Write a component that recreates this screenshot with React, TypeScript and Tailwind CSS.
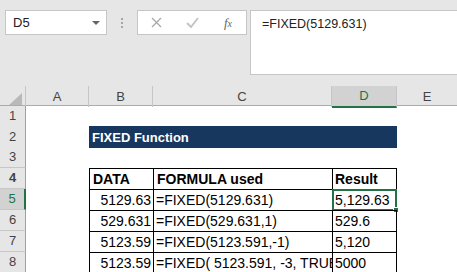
import React from 'react'

const grid = 'grid grid-cols-[26px_63px_64px_179px_65px_1fr]'

const rows = [
    { n: 5, data: '5129.63', formula: '=FIXED(5129.631)', result: '5,129.63', active: true },
    { n: 6, data: '529.631', formula: '=FIXED(529.631,1)', result: '529.6' },
    { n: 7, data: '5123.59', formula: '=FIXED(5123.591,-1)', result: '5,120' },
    { n: 8, data: '5123.59', formula: '=FIXED( 5123.591, -3, TRUE)', result: '5000' },
]

const RowHead = ({ n, active = false }: { n: number; active?: boolean }) => (
    <div
        className={
            active
                ? 'flex items-center justify-center bg-[#d2d2d2] text-[#217346] border-b border-b-[#c6c6c6] border-r-2 border-r-[#217346] text-[13px]'
                : 'flex items-center justify-center bg-[#e6e6e6] text-[#444] border-b border-b-[#c6c6c6] border-r border-r-[#9f9f9f] text-[13px]'
        }
    >
        {n}
    </div>
)

const App = () => {
    return (
        <div className="w-[457px] h-[272px] overflow-hidden bg-white font-['Liberation_Sans',Arial,sans-serif] text-black">
            {/* formula bar area */}
            <div className="h-[86px] bg-[#e6e6e6] flex items-start pt-[10px] pl-[5px]">
                <div className="w-[102px] h-[25px] bg-white border border-[#c6c6c6] flex items-center justify-between pl-[7px] pr-[6px] text-[13px] text-[#222]">
                    <span>D5</span>
                    <svg width="8" height="4" viewBox="0 0 8 4">
                        <path d="M0 0 L8 0 L4 4 Z" fill="#666" />
                    </svg>
                </div>
                <div className="w-[30px] flex flex-col items-center gap-[2px] pt-[8px]">
                    <span className="w-[2px] h-[2px] bg-[#a6a6a6]" />
                    <span className="w-[2px] h-[2px] bg-[#a6a6a6]" />
                    <span className="w-[2px] h-[2px] bg-[#a6a6a6]" />
                </div>
                <div className="w-[110px] h-[25px] bg-white border border-[#c6c6c6] flex items-center">
                    <span className="w-[36px] flex justify-center">
                        <svg width="11" height="11" viewBox="0 0 11 11">
                            <path d="M1 1 L10 10 M10 1 L1 10" stroke="#a8a8a8" strokeWidth="1.3" />
                        </svg>
                    </span>
                    <span className="w-[36px] flex justify-center">
                        <svg width="13" height="11" viewBox="0 0 13 11">
                            <path d="M1 6 L5 10 L12 1" stroke="#c4c4c4" strokeWidth="2" fill="none" />
                        </svg>
                    </span>
                    <span className="w-[36px] flex justify-center items-baseline font-['Liberation_Serif',serif] italic text-[#666] text-[13px]">
                        f<span className="text-[10px]">x</span>
                    </span>
                </div>
                <div className="ml-[3px] flex-1 h-[65px] bg-white border border-[#c6c6c6] border-r-0 pl-[11px] pt-[4px] text-[12.5px] leading-[18px] text-[#222]">
                    =FIXED(5129.631)
                </div>
            </div>

            {/* column headers */}
            <div className={`${grid} h-[20px] bg-[#e6e6e6] border-b border-[#ababab] text-[13px] text-[#444]`}>
                <div className="flex items-end justify-end pr-[3px] pb-[2px] border-r border-[#c6c6c6]">
                    <svg width="13" height="12" viewBox="0 0 13 12">
                        <path d="M13 0 L13 12 L0 12 Z" fill="#b9b9b9" />
                    </svg>
                </div>
                <div className="flex items-center justify-center border-r border-[#c6c6c6]">A</div>
                <div className="flex items-center justify-center border-r border-[#c6c6c6]">B</div>
                <div className="flex items-center justify-center border-r border-[#c6c6c6]">C</div>
                <div className="flex items-center justify-center bg-[#d2d2d2] text-[#217346] border-r border-[#c6c6c6] border-b-2 border-b-[#217346] -mb-[1px]">D</div>
                <div className="flex items-center justify-center">E</div>
            </div>

            {/* row 1 */}
            <div className={`${grid} h-[20px]`}>
                <RowHead n={1} />
            </div>

            {/* row 2 */}
            <div className={`${grid} h-[21px]`}>
                <RowHead n={2} />
                <div />
                <div className="col-span-3 bg-[#17375e] text-white font-bold text-[13px] leading-[21px] pl-[3px] pt-[1px]">
                    FIXED Function
                </div>
            </div>

            {/* row 3 */}
            <div className={`${grid} h-[21px]`}>
                <RowHead n={3} />
            </div>

            {/* row 4 */}
            <div className={`${grid} h-[21px] text-[14px] leading-[20px] font-bold`}>
                <RowHead n={4} />
                <div />
                <div className="border-l border-t border-black pl-[3px]">DATA</div>
                <div className="border-l border-t border-black pl-[3px]">FORMULA used</div>
                <div className="border-l border-t border-r border-black pl-[2px]">Result</div>
            </div>

            {rows.map((r) => (
                <div key={r.n} className={`${grid} h-[21px] text-[14px] leading-[20px]`}>
                    <RowHead n={r.n} active={r.active} />
                    <div />
                    <div className="border-l border-t border-black text-right pr-[2px]">{r.data}</div>
                    <div className="border-l border-t border-black pl-[2px] whitespace-nowrap overflow-hidden">{r.formula}</div>
                    <div className="relative border-l border-t border-r border-black pl-[2px]">
                        {r.result}
                        {r.active && (
                            <>
                                <span className="absolute -left-[1px] -top-[1px] -right-[1px] -bottom-[1px] border-2 border-[#217346]" />
                                <span className="absolute -right-[3px] -bottom-[3px] w-[6px] h-[6px] bg-[#217346] border border-white" />
                            </>
                        )}
                    </div>
                </div>
            ))}
        </div>
    )
}

export default App
